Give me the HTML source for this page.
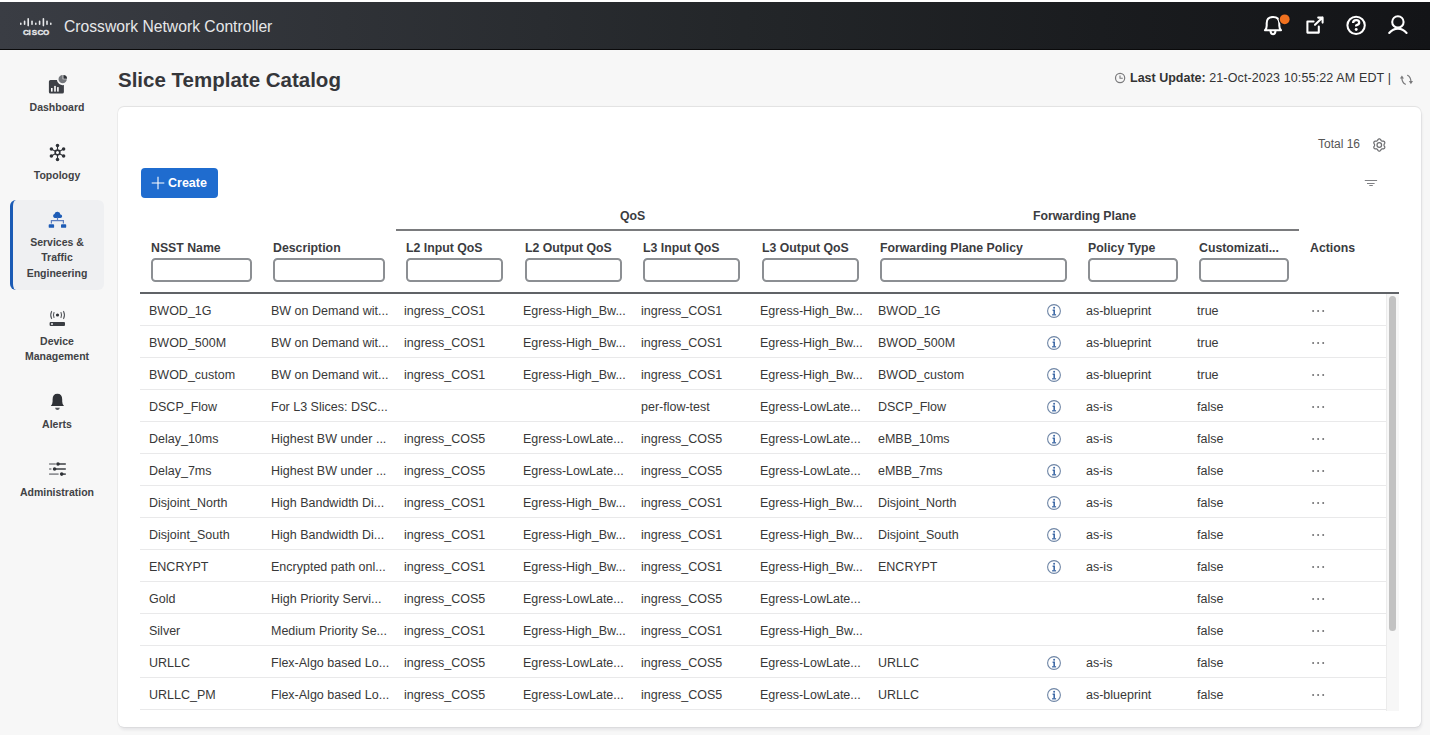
<!DOCTYPE html>
<html><head><meta charset="utf-8"><title>Slice Template Catalog</title>
<style>
*{box-sizing:border-box;margin:0;padding:0}
html,body{width:1430px;height:739px;overflow:hidden;background:#fff;font-family:"Liberation Sans",sans-serif;color:#333}
.abs{position:absolute}
#hdr{position:absolute;left:0;top:2px;width:1430px;height:48px;background:linear-gradient(90deg,#3a3d44 0%,#2f3237 24%,#232629 52%,#1a1c1f 77%,#131417 100%);border-bottom:1px solid #0a0a0b}
#page{position:absolute;left:0;top:50px;width:1430px;height:685px;background:#f7f7f7}
.brand{position:absolute;left:64px;top:16px;font-size:15.7px;color:#e6e7e9;letter-spacing:0;white-space:nowrap}
.nav{position:absolute;left:0;width:114px;text-align:center;font-size:10.5px;font-weight:bold;color:#414245;line-height:15.8px}
.navact{position:absolute;left:10px;top:200px;width:94px;height:90px;background:#eff0f2;border-radius:6px;border-left:3.5px solid #1b5bb5}
.title{position:absolute;left:118px;top:67.5px;font-size:20.5px;font-weight:bold;color:#35363a;white-space:nowrap}
.upd{position:absolute;left:1130px;top:71px;font-size:12.5px;color:#333;white-space:nowrap}
#card{position:absolute;left:118px;top:107px;width:1303px;height:620px;background:#fff;border-radius:6px;box-shadow:0 0 0 1px rgba(0,0,0,.035),0 -0.5px 1px rgba(0,0,0,.05),1px 3px 3px rgba(40,40,60,.08)}
.total{position:absolute;left:1318px;top:137px;font-size:12px;color:#555}
.btn{position:absolute;left:141px;top:168px;width:77px;height:30px;background:#1f6ccf;border-radius:4px;color:#fff;font-weight:bold;font-size:12.5px}
.hd{position:absolute;font-size:12.3px;font-weight:bold;color:#3b3c3f;white-space:nowrap}
.inp{position:absolute;top:258px;height:23.5px;border:2px solid #8c8f93;border-radius:4.5px;background:#fff}
.c{position:absolute;height:32px;line-height:32px;font-size:12.5px;color:#383838;white-space:nowrap}
.sep{position:absolute;left:140px;width:1246px;height:1px;background:#e9e9ea}
.info{position:absolute;left:1047px}
.dots{position:absolute;left:1310px}
</style></head><body>
<div id="hdr">
 <svg class="abs" style="left:18px;top:14px" width="36" height="24" viewBox="0 0 36 24">
  <g fill="#e8e9eb">
   <rect x="2" y="6.6" width="1.6" height="2.4" rx=".8"/>
   <rect x="5.8" y="4.6" width="1.6" height="4.4" rx=".8"/>
   <rect x="9.4" y="2" width="1.6" height="8.4" rx=".8"/>
   <rect x="13.2" y="4.6" width="1.6" height="4.4" rx=".8"/>
   <rect x="17" y="6.6" width="1.6" height="2.4" rx=".8"/>
   <rect x="20.8" y="4.6" width="1.6" height="4.4" rx=".8"/>
   <rect x="24.6" y="2" width="1.6" height="8.4" rx=".8"/>
   <rect x="28.2" y="4.6" width="1.6" height="4.4" rx=".8"/>
   <rect x="32" y="6.6" width="1.6" height="2.4" rx=".8"/>
  </g>
  <text x="5.0" y="18.6" font-family="Liberation Sans" font-weight="bold" font-size="8" fill="#e8e9eb" stroke="#e8e9eb" stroke-width="0.35">C</text><text x="10.4" y="18.6" font-family="Liberation Sans" font-weight="bold" font-size="8" fill="#e8e9eb" stroke="#e8e9eb" stroke-width="0.35">I</text><text x="13.8" y="18.6" font-family="Liberation Sans" font-weight="bold" font-size="8" fill="#e8e9eb" stroke="#e8e9eb" stroke-width="0.35">S</text><text x="19.4" y="18.6" font-family="Liberation Sans" font-weight="bold" font-size="8" fill="#e8e9eb" stroke="#e8e9eb" stroke-width="0.35">C</text><text x="25.0" y="18.6" font-family="Liberation Sans" font-weight="bold" font-size="8" fill="#e8e9eb" stroke="#e8e9eb" stroke-width="0.35">O</text>
 </svg>
 <div class="brand">Crosswork Network Controller</div>
 <svg class="abs" style="left:1258px;top:8px" width="160" height="34" viewBox="1258 10 160 34">
  <g fill="none" stroke="#fff" stroke-width="2.05" stroke-linecap="round" stroke-linejoin="round">
   <path d="M1265 30.2 H1281 Q1279.3 28.5 1279.3 25.8 V23.3 Q1279.3 17 1273 17 Q1266.7 17 1266.7 23.3 V25.8 Q1266.7 28.5 1265 30.2 Z"/>
   <path d="M1270.5 30.9 Q1270.8 34.3 1273 34.3 Q1275.2 34.3 1275.5 30.9"/>
   <path d="M1313.6 21.4 H1307.4 V32.6 H1318.8 V26.6"/>
   <path d="M1315 24.8 L1322.6 17.6 M1318.2 17.6 H1322.6 V22.6"/>
   <circle cx="1356.1" cy="25.35" r="8.7"/>
   <path d="M1353.1 23 Q1353.1 20.2 1356.2 20.2 Q1359.2 20.2 1359.2 22.7 Q1359.2 24.4 1356.2 25.3 V26.6" stroke-width="2.3" stroke-linecap="butt"/>
   <circle cx="1397.9" cy="21.9" r="5.7"/>
   <path d="M1389.2 33 Q1393 28.6 1397.9 28.6 Q1402.8 28.6 1406.6 33"/>
  </g>
  <circle cx="1356.2" cy="29.5" r="1.45" fill="#fff"/>
  <circle cx="1284.7" cy="19.3" r="6" fill="#141519"/>
  <circle cx="1284.7" cy="19.3" r="4.9" fill="#f0711f"/>
 </svg>
</div>
<div id="page"></div>

<!-- sidebar -->
<div class="navact"></div>
<svg class="abs" style="left:44px;top:70px" width="28" height="28" viewBox="44 70 28 28">
 <path d="M50.5 80 H56.9 A5.8 5.8 0 0 0 63.9 85.1 V92 Q63.9 93.6 62.3 93.6 H50.5 Q48.9 93.6 48.9 92 V81.6 Q48.9 80 50.5 80 Z" fill="#3d4046"/>
 <g fill="#fff"><rect x="51" y="88" width="1.6" height="3.6"/><rect x="54.2" y="85.9" width="1.6" height="5.7"/><rect x="57.1" y="87.1" width="1.6" height="4.5"/></g>
 <path d="M62.65 75 A4.15 4.15 0 1 0 66.8 79.15 H62.65 Z" fill="#74777c"/>
 <path d="M63.4 75.1 A3.65 3.65 0 0 1 67.05 78.75 H63.4 Z" fill="#2f3237"/>
</svg>
<div class="nav" style="top:100px">Dashboard</div>
<svg class="abs" style="left:44px;top:138px" width="28" height="28" viewBox="44 138 28 28">
 <g stroke="#2e3136" stroke-width="1.1"><path d="M57.5 145.5 V159.6 M51.4 149 L63.5 155.9 M51.4 155.9 L63.5 149"/></g>
 <g fill="#2e3136"><circle cx="57.5" cy="145.4" r="1.75"/><circle cx="57.5" cy="159.6" r="1.75"/><circle cx="51.4" cy="149" r="1.75"/><circle cx="63.6" cy="149" r="1.75"/><circle cx="51.4" cy="155.9" r="1.75"/><circle cx="63.6" cy="155.9" r="1.75"/></g>
 <circle cx="57.5" cy="152.4" r="2.3" fill="#fff" stroke="#2e3136" stroke-width="1.6"/>
</svg>
<div class="nav" style="top:168px">Topology</div>
<svg class="abs" style="left:44px;top:206px" width="28" height="26" viewBox="44 206 28 26">
 <path d="M54.7 217.9 A1.95 1.95 0 0 1 54.5 214.1 A3 3 0 0 1 60.4 214.4 A1.75 1.75 0 0 1 60.4 217.9 Z" fill="#1e5cb6"/>
 <path d="M57.5 217.5 V220.7 M51.4 223.4 V220.7 H63.4 V223.4" fill="none" stroke="#5e7fbf" stroke-width="1.2"/>
 <rect x="48.7" y="224.2" width="5.4" height="3.6" rx=".9" fill="#1e5cb6"/>
 <rect x="61" y="224.2" width="5.2" height="3.6" rx=".9" fill="#1e5cb6"/>
</svg>
<div class="nav" style="top:234.5px;left:10px;width:94px">Services &amp;<br>Traffic<br>Engineering</div>
<svg class="abs" style="left:44px;top:306px" width="28" height="24" viewBox="44 306 28 24">
 <g fill="none" stroke="#55585d" stroke-width="1.1" stroke-linecap="round">
  <path d="M51.6 311.4 Q49.8 315 51.6 318.6 M63.6 311.4 Q65.4 315 63.6 318.6"/>
  <path d="M54 312.6 Q52.9 315 54 317.4 M61 312.6 Q62.1 315 61 317.4"/>
 </g>
 <circle cx="57.5" cy="315" r="1.6" fill="#2e3136"/>
 <rect x="49.6" y="322" width="15.4" height="4" rx="1" fill="#3a3d42"/>
 <circle cx="52" cy="324" r=".9" fill="#fff"/>
</svg>
<div class="nav" style="top:333.5px">Device<br>Management</div>
<svg class="abs" style="left:44px;top:390px" width="28" height="24" viewBox="44 390 28 24">
 <path d="M50.8 405.9 Q52.6 404.4 52.6 401.5 V399.5 Q52.6 393.7 57.4 393.7 Q62.2 393.7 62.2 399.5 V401.5 Q62.2 404.4 64 405.9 Z" fill="#2f3237"/>
 <path d="M55 407.8 H59.9 Q59.4 410.1 57.45 410.1 Q55.5 410.1 55 407.8 Z" fill="#55585d"/>
</svg>
<div class="nav" style="top:417px">Alerts</div>
<svg class="abs" style="left:44px;top:457px" width="28" height="22" viewBox="44 457 28 22">
 <g stroke-width="1.4">
  <path d="M49.1 464 H55.8" stroke="#77797d"/><path d="M58 464 H65.8" stroke="#2e3136"/>
  <path d="M49.1 469 H51.4" stroke="#77797d"/><path d="M54.6 469 H65.8" stroke="#2e3136"/>
  <path d="M49.1 474.1 H58.6" stroke="#77797d"/><path d="M61.7 474.1 H65.8" stroke="#2e3136"/>
 </g>
 <g fill="#2e3136"><circle cx="58" cy="464" r="1.8"/><circle cx="54.6" cy="469" r="1.8"/><circle cx="61.7" cy="474.1" r="1.8"/></g>
</svg>
<div class="nav" style="top:485px">Administration</div>

<div class="title">Slice Template Catalog</div>
<svg class="abs" style="left:1112px;top:70px" width="16" height="16" viewBox="1112 70 16 16">
 <circle cx="1120.1" cy="78" r="4.6" fill="none" stroke="#7a7a7c" stroke-width="1.2"/>
 <path d="M1120 75.4 V78.3 H1122.8" fill="none" stroke="#7a7a7c" stroke-width="1.1"/>
</svg>
<div class="upd"><b>Last Update:</b> <span style="letter-spacing:.13px">21-Oct-2023 10:55:22 AM EDT |</span></div>
<svg class="abs" style="left:1398px;top:72px" width="16" height="15" viewBox="1398 72 16 15">
 <g fill="none" stroke="#7a7a7c" stroke-width="1.2" stroke-linecap="round">
  <path d="M1405.4 84.2 Q1401.8 82.4 1401.9 77.4"/>
  <path d="M1407.6 75.3 Q1411.1 77.3 1410.9 82.4"/>
 </g>
 <path d="M1399.9 78.6 L1401.9 75.6 L1404 78.6 Z" fill="#7a7a7c"/>
 <path d="M1408.9 81 L1410.9 84.2 L1413 81 Z" fill="#7a7a7c"/>
</svg>

<div id="card"></div>
<div class="total">Total 16</div>
<svg class="abs" style="left:1371px;top:137px" width="17" height="17" viewBox="1371 137 17 17">
 <path d="M1384.00 145.00 L1384.02 145.25 L1384.07 145.50 L1384.16 145.77 L1384.28 146.06 L1384.52 146.40 L1384.73 146.76 L1384.79 147.11 L1384.78 147.44 L1384.71 147.76 L1384.58 148.05 L1384.40 148.31 L1384.16 148.53 L1383.87 148.70 L1383.54 148.82 L1383.12 148.82 L1382.71 148.78 L1382.39 148.82 L1382.12 148.88 L1381.87 148.96 L1381.65 149.07 L1381.44 149.21 L1381.25 149.38 L1381.06 149.59 L1380.87 149.84 L1380.70 150.22 L1380.49 150.58 L1380.22 150.81 L1379.93 150.97 L1379.62 151.07 L1379.30 151.10 L1378.98 151.07 L1378.67 150.97 L1378.38 150.81 L1378.11 150.58 L1377.90 150.22 L1377.73 149.84 L1377.54 149.59 L1377.35 149.38 L1377.16 149.21 L1376.95 149.07 L1376.73 148.96 L1376.48 148.88 L1376.21 148.82 L1375.89 148.78 L1375.48 148.82 L1375.06 148.82 L1374.73 148.70 L1374.44 148.53 L1374.20 148.31 L1374.02 148.05 L1373.89 147.76 L1373.82 147.44 L1373.81 147.11 L1373.87 146.76 L1374.08 146.40 L1374.32 146.06 L1374.44 145.77 L1374.53 145.50 L1374.58 145.25 L1374.60 145.00 L1374.58 144.75 L1374.53 144.50 L1374.44 144.23 L1374.32 143.94 L1374.08 143.60 L1373.87 143.24 L1373.81 142.89 L1373.82 142.56 L1373.89 142.24 L1374.02 141.95 L1374.20 141.69 L1374.44 141.47 L1374.73 141.30 L1375.06 141.18 L1375.48 141.18 L1375.89 141.22 L1376.21 141.18 L1376.48 141.12 L1376.73 141.04 L1376.95 140.93 L1377.16 140.79 L1377.35 140.62 L1377.54 140.41 L1377.73 140.16 L1377.90 139.78 L1378.11 139.42 L1378.38 139.19 L1378.67 139.03 L1378.98 138.93 L1379.30 138.90 L1379.62 138.93 L1379.93 139.03 L1380.22 139.19 L1380.49 139.42 L1380.70 139.78 L1380.87 140.16 L1381.06 140.41 L1381.25 140.62 L1381.44 140.79 L1381.65 140.93 L1381.87 141.04 L1382.12 141.12 L1382.39 141.18 L1382.71 141.22 L1383.12 141.18 L1383.54 141.18 L1383.87 141.30 L1384.16 141.47 L1384.40 141.69 L1384.58 141.95 L1384.71 142.24 L1384.78 142.56 L1384.79 142.89 L1384.73 143.24 L1384.52 143.60 L1384.28 143.94 L1384.16 144.23 L1384.07 144.50 L1384.02 144.75 L1384.00 145.00Z" fill="none" stroke="#6e6f72" stroke-width="1.25" stroke-linejoin="round"/>
 <circle cx="1379.3" cy="145" r="2.3" fill="none" stroke="#6e6f72" stroke-width="1.25"/>
</svg>
<div class="btn">
 <svg class="abs" style="left:9px;top:7px" width="16" height="16" viewBox="0 0 16 16"><path d="M8 1.7V14.3M1.7 8H14.3" stroke="#fff" stroke-width="1.1"/></svg>
 <span class="abs" style="left:27px;top:8px">Create</span>
</div>
<svg class="abs" style="left:1362px;top:176px" width="18" height="14" viewBox="1362 176 18 14">
 <path d="M1364.8 180.5 H1377.1 M1367 183.5 H1374.6 M1369.3 185.5 H1372.8" stroke="#808184" stroke-width="1.05"/>
</svg>

<!-- table header -->
<div class="hd" style="left:620px;top:209px">QoS</div>
<div class="hd" style="left:1033px;top:209px">Forwarding Plane</div>
<div class="abs" style="left:396px;top:229px;width:903px;height:2px;background:#7a7b7d"></div>
<div class="hd" style="left:151px;top:241px">NSST Name</div>
<div class="hd" style="left:273px;top:241px">Description</div>
<div class="hd" style="left:406px;top:241px">L2 Input QoS</div>
<div class="hd" style="left:525px;top:241px">L2 Output QoS</div>
<div class="hd" style="left:643px;top:241px">L3 Input QoS</div>
<div class="hd" style="left:762px;top:241px">L3 Output QoS</div>
<div class="hd" style="left:880px;top:241px">Forwarding Plane Policy</div>
<div class="hd" style="left:1088px;top:241px">Policy Type</div>
<div class="hd" style="left:1199px;top:241px">Customizati...</div>
<div class="hd" style="left:1310px;top:241px">Actions</div>
<div class="inp" style="left:151px;width:101px"></div>
<div class="inp" style="left:273px;width:112px"></div>
<div class="inp" style="left:406px;width:97px"></div>
<div class="inp" style="left:525px;width:97px"></div>
<div class="inp" style="left:643px;width:97px"></div>
<div class="inp" style="left:762px;width:97px"></div>
<div class="inp" style="left:880px;width:187px"></div>
<div class="inp" style="left:1088px;width:90px"></div>
<div class="inp" style="left:1199px;width:90px"></div>
<div class="abs" style="left:140px;top:292px;width:1259px;height:2px;background:#606367"></div>

<!-- body -->
<div class="sep" style="top:325px"></div>
<div class="c" style="left:149px;top:295px">BWOD_1G</div>
<div class="c" style="left:271px;top:295px">BW on Demand wit...</div>
<div class="c" style="left:404px;top:295px">ingress_COS1</div>
<div class="c" style="left:523px;top:295px">Egress-High_Bw...</div>
<div class="c" style="left:641px;top:295px">ingress_COS1</div>
<div class="c" style="left:760px;top:295px">Egress-High_Bw...</div>
<div class="c" style="left:878px;top:295px">BWOD_1G</div>
<svg class="info" style="top:304px" width="14" height="14" viewBox="0 0 14 14"><circle cx="7" cy="7" r="6.4" fill="none" stroke="#6f86a6" stroke-width="1.1"/><circle cx="7.1" cy="3.7" r="1" fill="#3f6aa6"/><path d="M5.6 6.3H7.2V10.6" fill="none" stroke="#3f6aa6" stroke-width="1.6"/><path d="M5.1 10.8H9.1" fill="none" stroke="#3f6aa6" stroke-width="1.3"/></svg>
<div class="c" style="left:1086px;top:295px">as-blueprint</div>
<div class="c" style="left:1197px;top:295px">true</div>
<svg class="dots" style="top:309px" width="16" height="4" viewBox="0 0 16 4"><g fill="#707072"><circle cx="3.1" cy="2" r="1"/><circle cx="8.15" cy="2" r="1"/><circle cx="13.2" cy="2" r="1"/></g></svg>
<div class="sep" style="top:357px"></div>
<div class="c" style="left:149px;top:327px">BWOD_500M</div>
<div class="c" style="left:271px;top:327px">BW on Demand wit...</div>
<div class="c" style="left:404px;top:327px">ingress_COS1</div>
<div class="c" style="left:523px;top:327px">Egress-High_Bw...</div>
<div class="c" style="left:641px;top:327px">ingress_COS1</div>
<div class="c" style="left:760px;top:327px">Egress-High_Bw...</div>
<div class="c" style="left:878px;top:327px">BWOD_500M</div>
<svg class="info" style="top:336px" width="14" height="14" viewBox="0 0 14 14"><circle cx="7" cy="7" r="6.4" fill="none" stroke="#6f86a6" stroke-width="1.1"/><circle cx="7.1" cy="3.7" r="1" fill="#3f6aa6"/><path d="M5.6 6.3H7.2V10.6" fill="none" stroke="#3f6aa6" stroke-width="1.6"/><path d="M5.1 10.8H9.1" fill="none" stroke="#3f6aa6" stroke-width="1.3"/></svg>
<div class="c" style="left:1086px;top:327px">as-blueprint</div>
<div class="c" style="left:1197px;top:327px">true</div>
<svg class="dots" style="top:341px" width="16" height="4" viewBox="0 0 16 4"><g fill="#707072"><circle cx="3.1" cy="2" r="1"/><circle cx="8.15" cy="2" r="1"/><circle cx="13.2" cy="2" r="1"/></g></svg>
<div class="sep" style="top:389px"></div>
<div class="c" style="left:149px;top:359px">BWOD_custom</div>
<div class="c" style="left:271px;top:359px">BW on Demand wit...</div>
<div class="c" style="left:404px;top:359px">ingress_COS1</div>
<div class="c" style="left:523px;top:359px">Egress-High_Bw...</div>
<div class="c" style="left:641px;top:359px">ingress_COS1</div>
<div class="c" style="left:760px;top:359px">Egress-High_Bw...</div>
<div class="c" style="left:878px;top:359px">BWOD_custom</div>
<svg class="info" style="top:368px" width="14" height="14" viewBox="0 0 14 14"><circle cx="7" cy="7" r="6.4" fill="none" stroke="#6f86a6" stroke-width="1.1"/><circle cx="7.1" cy="3.7" r="1" fill="#3f6aa6"/><path d="M5.6 6.3H7.2V10.6" fill="none" stroke="#3f6aa6" stroke-width="1.6"/><path d="M5.1 10.8H9.1" fill="none" stroke="#3f6aa6" stroke-width="1.3"/></svg>
<div class="c" style="left:1086px;top:359px">as-blueprint</div>
<div class="c" style="left:1197px;top:359px">true</div>
<svg class="dots" style="top:373px" width="16" height="4" viewBox="0 0 16 4"><g fill="#707072"><circle cx="3.1" cy="2" r="1"/><circle cx="8.15" cy="2" r="1"/><circle cx="13.2" cy="2" r="1"/></g></svg>
<div class="sep" style="top:421px"></div>
<div class="c" style="left:149px;top:391px">DSCP_Flow</div>
<div class="c" style="left:271px;top:391px">For L3 Slices: DSC...</div>
<div class="c" style="left:641px;top:391px">per-flow-test</div>
<div class="c" style="left:760px;top:391px">Egress-LowLate...</div>
<div class="c" style="left:878px;top:391px">DSCP_Flow</div>
<svg class="info" style="top:400px" width="14" height="14" viewBox="0 0 14 14"><circle cx="7" cy="7" r="6.4" fill="none" stroke="#6f86a6" stroke-width="1.1"/><circle cx="7.1" cy="3.7" r="1" fill="#3f6aa6"/><path d="M5.6 6.3H7.2V10.6" fill="none" stroke="#3f6aa6" stroke-width="1.6"/><path d="M5.1 10.8H9.1" fill="none" stroke="#3f6aa6" stroke-width="1.3"/></svg>
<div class="c" style="left:1086px;top:391px">as-is</div>
<div class="c" style="left:1197px;top:391px">false</div>
<svg class="dots" style="top:405px" width="16" height="4" viewBox="0 0 16 4"><g fill="#707072"><circle cx="3.1" cy="2" r="1"/><circle cx="8.15" cy="2" r="1"/><circle cx="13.2" cy="2" r="1"/></g></svg>
<div class="sep" style="top:453px"></div>
<div class="c" style="left:149px;top:423px">Delay_10ms</div>
<div class="c" style="left:271px;top:423px">Highest BW under ...</div>
<div class="c" style="left:404px;top:423px">ingress_COS5</div>
<div class="c" style="left:523px;top:423px">Egress-LowLate...</div>
<div class="c" style="left:641px;top:423px">ingress_COS5</div>
<div class="c" style="left:760px;top:423px">Egress-LowLate...</div>
<div class="c" style="left:878px;top:423px">eMBB_10ms</div>
<svg class="info" style="top:432px" width="14" height="14" viewBox="0 0 14 14"><circle cx="7" cy="7" r="6.4" fill="none" stroke="#6f86a6" stroke-width="1.1"/><circle cx="7.1" cy="3.7" r="1" fill="#3f6aa6"/><path d="M5.6 6.3H7.2V10.6" fill="none" stroke="#3f6aa6" stroke-width="1.6"/><path d="M5.1 10.8H9.1" fill="none" stroke="#3f6aa6" stroke-width="1.3"/></svg>
<div class="c" style="left:1086px;top:423px">as-is</div>
<div class="c" style="left:1197px;top:423px">false</div>
<svg class="dots" style="top:437px" width="16" height="4" viewBox="0 0 16 4"><g fill="#707072"><circle cx="3.1" cy="2" r="1"/><circle cx="8.15" cy="2" r="1"/><circle cx="13.2" cy="2" r="1"/></g></svg>
<div class="sep" style="top:485px"></div>
<div class="c" style="left:149px;top:455px">Delay_7ms</div>
<div class="c" style="left:271px;top:455px">Highest BW under ...</div>
<div class="c" style="left:404px;top:455px">ingress_COS5</div>
<div class="c" style="left:523px;top:455px">Egress-LowLate...</div>
<div class="c" style="left:641px;top:455px">ingress_COS5</div>
<div class="c" style="left:760px;top:455px">Egress-LowLate...</div>
<div class="c" style="left:878px;top:455px">eMBB_7ms</div>
<svg class="info" style="top:464px" width="14" height="14" viewBox="0 0 14 14"><circle cx="7" cy="7" r="6.4" fill="none" stroke="#6f86a6" stroke-width="1.1"/><circle cx="7.1" cy="3.7" r="1" fill="#3f6aa6"/><path d="M5.6 6.3H7.2V10.6" fill="none" stroke="#3f6aa6" stroke-width="1.6"/><path d="M5.1 10.8H9.1" fill="none" stroke="#3f6aa6" stroke-width="1.3"/></svg>
<div class="c" style="left:1086px;top:455px">as-is</div>
<div class="c" style="left:1197px;top:455px">false</div>
<svg class="dots" style="top:469px" width="16" height="4" viewBox="0 0 16 4"><g fill="#707072"><circle cx="3.1" cy="2" r="1"/><circle cx="8.15" cy="2" r="1"/><circle cx="13.2" cy="2" r="1"/></g></svg>
<div class="sep" style="top:517px"></div>
<div class="c" style="left:149px;top:487px">Disjoint_North</div>
<div class="c" style="left:271px;top:487px">High Bandwidth Di...</div>
<div class="c" style="left:404px;top:487px">ingress_COS1</div>
<div class="c" style="left:523px;top:487px">Egress-High_Bw...</div>
<div class="c" style="left:641px;top:487px">ingress_COS1</div>
<div class="c" style="left:760px;top:487px">Egress-High_Bw...</div>
<div class="c" style="left:878px;top:487px">Disjoint_North</div>
<svg class="info" style="top:496px" width="14" height="14" viewBox="0 0 14 14"><circle cx="7" cy="7" r="6.4" fill="none" stroke="#6f86a6" stroke-width="1.1"/><circle cx="7.1" cy="3.7" r="1" fill="#3f6aa6"/><path d="M5.6 6.3H7.2V10.6" fill="none" stroke="#3f6aa6" stroke-width="1.6"/><path d="M5.1 10.8H9.1" fill="none" stroke="#3f6aa6" stroke-width="1.3"/></svg>
<div class="c" style="left:1086px;top:487px">as-is</div>
<div class="c" style="left:1197px;top:487px">false</div>
<svg class="dots" style="top:501px" width="16" height="4" viewBox="0 0 16 4"><g fill="#707072"><circle cx="3.1" cy="2" r="1"/><circle cx="8.15" cy="2" r="1"/><circle cx="13.2" cy="2" r="1"/></g></svg>
<div class="sep" style="top:549px"></div>
<div class="c" style="left:149px;top:519px">Disjoint_South</div>
<div class="c" style="left:271px;top:519px">High Bandwidth Di...</div>
<div class="c" style="left:404px;top:519px">ingress_COS1</div>
<div class="c" style="left:523px;top:519px">Egress-High_Bw...</div>
<div class="c" style="left:641px;top:519px">ingress_COS1</div>
<div class="c" style="left:760px;top:519px">Egress-High_Bw...</div>
<div class="c" style="left:878px;top:519px">Disjoint_South</div>
<svg class="info" style="top:528px" width="14" height="14" viewBox="0 0 14 14"><circle cx="7" cy="7" r="6.4" fill="none" stroke="#6f86a6" stroke-width="1.1"/><circle cx="7.1" cy="3.7" r="1" fill="#3f6aa6"/><path d="M5.6 6.3H7.2V10.6" fill="none" stroke="#3f6aa6" stroke-width="1.6"/><path d="M5.1 10.8H9.1" fill="none" stroke="#3f6aa6" stroke-width="1.3"/></svg>
<div class="c" style="left:1086px;top:519px">as-is</div>
<div class="c" style="left:1197px;top:519px">false</div>
<svg class="dots" style="top:533px" width="16" height="4" viewBox="0 0 16 4"><g fill="#707072"><circle cx="3.1" cy="2" r="1"/><circle cx="8.15" cy="2" r="1"/><circle cx="13.2" cy="2" r="1"/></g></svg>
<div class="sep" style="top:581px"></div>
<div class="c" style="left:149px;top:551px">ENCRYPT</div>
<div class="c" style="left:271px;top:551px">Encrypted path onl...</div>
<div class="c" style="left:404px;top:551px">ingress_COS1</div>
<div class="c" style="left:523px;top:551px">Egress-High_Bw...</div>
<div class="c" style="left:641px;top:551px">ingress_COS1</div>
<div class="c" style="left:760px;top:551px">Egress-High_Bw...</div>
<div class="c" style="left:878px;top:551px">ENCRYPT</div>
<svg class="info" style="top:560px" width="14" height="14" viewBox="0 0 14 14"><circle cx="7" cy="7" r="6.4" fill="none" stroke="#6f86a6" stroke-width="1.1"/><circle cx="7.1" cy="3.7" r="1" fill="#3f6aa6"/><path d="M5.6 6.3H7.2V10.6" fill="none" stroke="#3f6aa6" stroke-width="1.6"/><path d="M5.1 10.8H9.1" fill="none" stroke="#3f6aa6" stroke-width="1.3"/></svg>
<div class="c" style="left:1086px;top:551px">as-is</div>
<div class="c" style="left:1197px;top:551px">false</div>
<svg class="dots" style="top:565px" width="16" height="4" viewBox="0 0 16 4"><g fill="#707072"><circle cx="3.1" cy="2" r="1"/><circle cx="8.15" cy="2" r="1"/><circle cx="13.2" cy="2" r="1"/></g></svg>
<div class="sep" style="top:613px"></div>
<div class="c" style="left:149px;top:583px">Gold</div>
<div class="c" style="left:271px;top:583px">High Priority Servi...</div>
<div class="c" style="left:404px;top:583px">ingress_COS5</div>
<div class="c" style="left:523px;top:583px">Egress-LowLate...</div>
<div class="c" style="left:641px;top:583px">ingress_COS5</div>
<div class="c" style="left:760px;top:583px">Egress-LowLate...</div>
<div class="c" style="left:1197px;top:583px">false</div>
<svg class="dots" style="top:597px" width="16" height="4" viewBox="0 0 16 4"><g fill="#707072"><circle cx="3.1" cy="2" r="1"/><circle cx="8.15" cy="2" r="1"/><circle cx="13.2" cy="2" r="1"/></g></svg>
<div class="sep" style="top:645px"></div>
<div class="c" style="left:149px;top:615px">Silver</div>
<div class="c" style="left:271px;top:615px">Medium Priority Se...</div>
<div class="c" style="left:404px;top:615px">ingress_COS1</div>
<div class="c" style="left:523px;top:615px">Egress-High_Bw...</div>
<div class="c" style="left:641px;top:615px">ingress_COS1</div>
<div class="c" style="left:760px;top:615px">Egress-High_Bw...</div>
<div class="c" style="left:1197px;top:615px">false</div>
<svg class="dots" style="top:629px" width="16" height="4" viewBox="0 0 16 4"><g fill="#707072"><circle cx="3.1" cy="2" r="1"/><circle cx="8.15" cy="2" r="1"/><circle cx="13.2" cy="2" r="1"/></g></svg>
<div class="sep" style="top:677px"></div>
<div class="c" style="left:149px;top:647px">URLLC</div>
<div class="c" style="left:271px;top:647px">Flex-Algo based Lo...</div>
<div class="c" style="left:404px;top:647px">ingress_COS5</div>
<div class="c" style="left:523px;top:647px">Egress-LowLate...</div>
<div class="c" style="left:641px;top:647px">ingress_COS5</div>
<div class="c" style="left:760px;top:647px">Egress-LowLate...</div>
<div class="c" style="left:878px;top:647px">URLLC</div>
<svg class="info" style="top:656px" width="14" height="14" viewBox="0 0 14 14"><circle cx="7" cy="7" r="6.4" fill="none" stroke="#6f86a6" stroke-width="1.1"/><circle cx="7.1" cy="3.7" r="1" fill="#3f6aa6"/><path d="M5.6 6.3H7.2V10.6" fill="none" stroke="#3f6aa6" stroke-width="1.6"/><path d="M5.1 10.8H9.1" fill="none" stroke="#3f6aa6" stroke-width="1.3"/></svg>
<div class="c" style="left:1086px;top:647px">as-is</div>
<div class="c" style="left:1197px;top:647px">false</div>
<svg class="dots" style="top:661px" width="16" height="4" viewBox="0 0 16 4"><g fill="#707072"><circle cx="3.1" cy="2" r="1"/><circle cx="8.15" cy="2" r="1"/><circle cx="13.2" cy="2" r="1"/></g></svg>
<div class="sep" style="top:709px"></div>
<div class="c" style="left:149px;top:679px">URLLC_PM</div>
<div class="c" style="left:271px;top:679px">Flex-Algo based Lo...</div>
<div class="c" style="left:404px;top:679px">ingress_COS5</div>
<div class="c" style="left:523px;top:679px">Egress-LowLate...</div>
<div class="c" style="left:641px;top:679px">ingress_COS5</div>
<div class="c" style="left:760px;top:679px">Egress-LowLate...</div>
<div class="c" style="left:878px;top:679px">URLLC</div>
<svg class="info" style="top:688px" width="14" height="14" viewBox="0 0 14 14"><circle cx="7" cy="7" r="6.4" fill="none" stroke="#6f86a6" stroke-width="1.1"/><circle cx="7.1" cy="3.7" r="1" fill="#3f6aa6"/><path d="M5.6 6.3H7.2V10.6" fill="none" stroke="#3f6aa6" stroke-width="1.6"/><path d="M5.1 10.8H9.1" fill="none" stroke="#3f6aa6" stroke-width="1.3"/></svg>
<div class="c" style="left:1086px;top:679px">as-blueprint</div>
<div class="c" style="left:1197px;top:679px">false</div>
<svg class="dots" style="top:693px" width="16" height="4" viewBox="0 0 16 4"><g fill="#707072"><circle cx="3.1" cy="2" r="1"/><circle cx="8.15" cy="2" r="1"/><circle cx="13.2" cy="2" r="1"/></g></svg>
<div class="abs" style="left:1386px;top:294px;width:13px;height:417px;background:#f7f7f7;border-left:1px solid #ececec"></div>
<div class="abs" style="left:1389px;top:296px;width:7px;height:335px;background:#c2c2c2;border-radius:4px"></div>
</body></html>
